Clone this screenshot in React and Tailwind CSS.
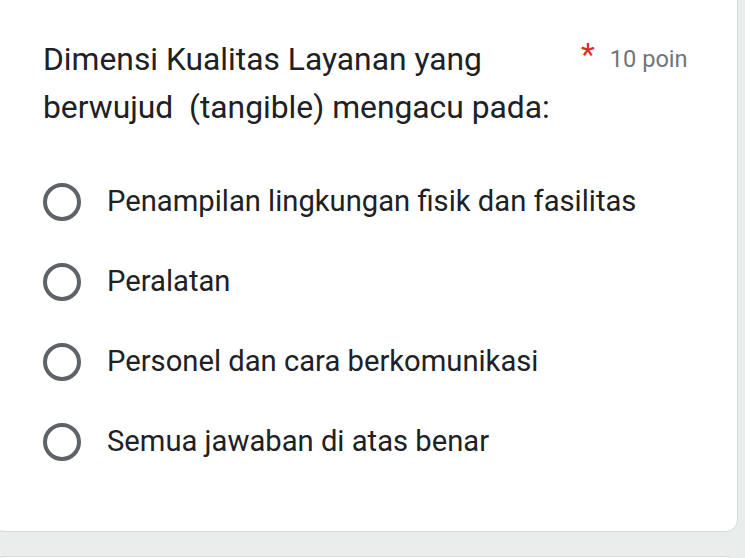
export default function App() {
  const options = [
    "Penampilan lingkungan fisik dan fasilitas",
    "Peralatan",
    "Personel dan cara berkomunikasi",
    "Semua jawaban di atas benar",
  ];
  return (
    <div
      className="w-[745px] h-[558px] overflow-hidden bg-[#e9eeed]"
      style={{ fontFamily: "Roboto, 'Noto Sans', sans-serif" }}
    >
      <div className="ml-[-8px] mt-[-20px] w-[746px] rounded-[12px] border border-[#d6d9dc] bg-white pl-[50px] pt-[54px] pb-[49px]">
        <div className="flex items-start">
          <div className="w-[510px] text-[31.8px] leading-[48px] text-[#202124]">
            Dimensi Kualitas Layanan yang berwujud{"\u00a0"} (tangible) mengacu pada:
          </div>
          <div className="ml-[28px] mt-[-1px] text-[32px] leading-[40px] text-[#d93025]">*</div>
          <div className="ml-[15px] text-[23.6px] leading-[49px] text-[#70757a]">10 poin</div>
        </div>
        <div className="mt-[31px] flex flex-col">
          {options.map((o) => (
            <div key={o} className="flex h-[80px] items-center">
              <div className="h-[38px] w-[38px] shrink-0 rounded-full border-[4px] border-[#5f6368]" />
              <div className="ml-[26px] whitespace-nowrap text-[29.2px] text-[#202124]">{o}</div>
            </div>
          ))}
        </div>
      </div>
      <div className="ml-[-8px] mt-[24px] h-[40px] w-[746px] rounded-[12px] border border-[#d6d9dc] bg-white" />
    </div>
  );
}
